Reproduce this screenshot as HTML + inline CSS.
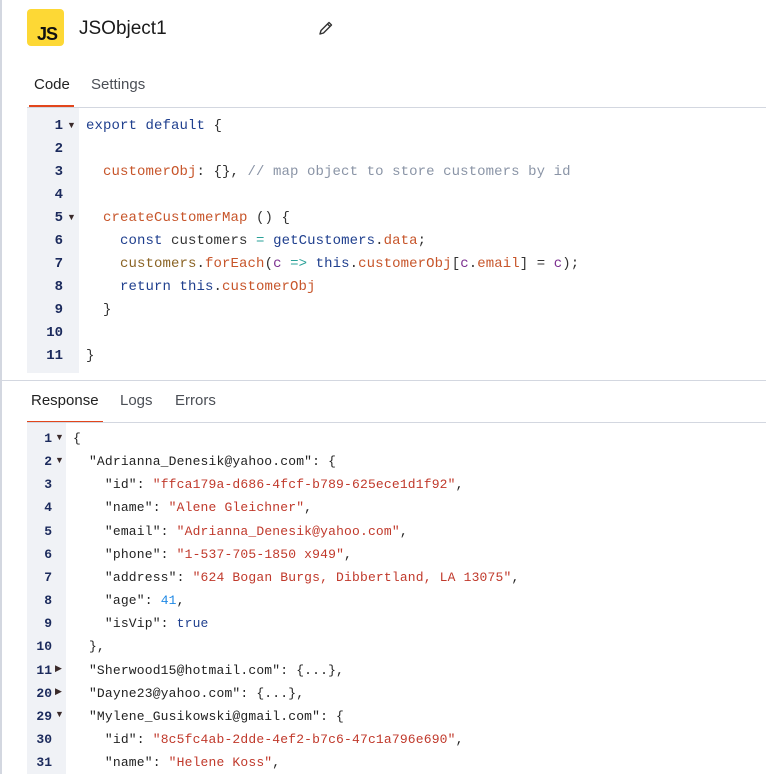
<!DOCTYPE html>
<html><head><style>
body{margin:0;width:766px;height:774px;overflow:hidden;background:#fff;font-family:"Liberation Sans",sans-serif;position:relative}
.lb{position:absolute;left:0;top:0;width:2px;height:774px;background:#d3d7e0}
.logo{position:absolute;left:27px;top:9px;width:37px;height:37px;background:#fdd835;border-radius:4px}
.logo span{position:absolute;left:10px;top:15px;font:bold 18px "Liberation Sans",sans-serif;color:#111;letter-spacing:-1px}
.title{position:absolute;left:79px;top:18px;font-size:19px;color:#1a1a1a}
.tab{position:absolute;font-size:15px;color:#4b4f56}
.ul{position:absolute;height:2px;background:#e2461c}
.hl{position:absolute;height:1px;background:#d3d7e0;left:27px;right:0}
.gut{position:absolute;left:27px;background:#f0f2f6}
.ln{position:absolute;font:bold 14px "Liberation Mono",monospace;color:#1b2a5c;text-align:right}
.code{position:absolute;font-family:"Liberation Mono",monospace;white-space:pre;color:#333}
.k{color:#1f3f8e}.p{color:#c7552a}.c{color:#8a94a6}.f{color:#8a6324}.s{color:#c0392b}.n{color:#1e88e5}.op{color:#2aa198}.v{color:#7b2f8f}
.ar{font-size:9px;color:#3a2a2a;font-weight:normal}
</style></head><body>
<div class="lb"></div>
<div class="logo"><span>JS</span></div>
<div class="title">JSObject1</div>
<svg style="position:absolute;left:318px;top:20px" width="16" height="16" viewBox="0 0 16 16"><path d="M2 14 L3 10.5 L11 2.5 L13.5 5 L5.5 13 Z M9.5 4 L12 6.5" fill="none" stroke="#333" stroke-width="1.4" stroke-linejoin="round"/></svg>
<div class="tab" style="left:34px;top:76px;color:#222">Code</div>
<div class="tab" style="left:91px;top:76px">Settings</div>
<div class="ul" style="left:29px;top:105px;width:45px"></div>
<div class="hl" style="top:107px"></div>
<div class="gut" style="top:108px;width:52px;height:265px"></div>
<div class="ln" style="left:27px;top:115px;width:36px;line-height:23px">1<br>2<br>3<br>4<br>5<br>6<br>7<br>8<br>9<br>10<br>11</div>
<div class="ar" style="position:absolute;left:67px;top:120px">▼</div>
<div class="ar" style="position:absolute;left:67px;top:212px">▼</div>
<div class="code" style="left:86px;top:115px;font-size:14px;line-height:23px;letter-spacing:0.1px"><span class="k">export default</span> {

  <span class="p">customerObj</span>: {}, <span class="c">// map object to store customers by id</span>

  <span class="p">createCustomerMap</span> () {
    <span class="k">const</span> customers <span class="op">=</span> <span class="k">getCustomers</span>.<span class="p">data</span>;
    <span class="f">customers</span>.<span class="p">forEach</span>(<span class="v">c</span> <span class="op">=&gt;</span> <span class="k">this</span>.<span class="p">customerObj</span>[<span class="v">c</span>.<span class="p">email</span>] = <span class="v">c</span>);
    <span class="k">return this</span>.<span class="p">customerObj</span>
  }

}</div>
<div class="hl" style="top:380px;left:0"></div>
<div class="tab" style="left:31px;top:392px;color:#222">Response</div>
<div class="tab" style="left:120px;top:392px">Logs</div>
<div class="tab" style="left:175px;top:392px">Errors</div>
<div class="ul" style="left:27px;top:421px;width:76px"></div>
<div class="hl" style="top:422px"></div>
<div class="gut" style="top:423px;width:39px;height:351px"></div>
<div class="ln" style="left:27px;top:427px;width:25px;line-height:23.15px;font-size:13px">1<br>2<br>3<br>4<br>5<br>6<br>7<br>8<br>9<br>10<br>11<br>20<br>29<br>30<br>31</div>
<div class="ar" style="position:absolute;left:55px;top:432px">▼</div>
<div class="ar" style="position:absolute;left:55px;top:455px">▼</div>
<div class="ar" style="position:absolute;left:55px;top:663px">▶</div>
<div class="ar" style="position:absolute;left:55px;top:686px">▶</div>
<div class="ar" style="position:absolute;left:55px;top:709px">▼</div>
<div class="code" style="left:73px;top:427px;font-size:13px;line-height:23.15px;color:#222;letter-spacing:0.17px">{
  "Adrianna_Denesik@yahoo.com": {
    "id": <span class="s">"ffca179a-d686-4fcf-b789-625ece1d1f92"</span>,
    "name": <span class="s">"Alene Gleichner"</span>,
    "email": <span class="s">"Adrianna_Denesik@yahoo.com"</span>,
    "phone": <span class="s">"1-537-705-1850 x949"</span>,
    "address": <span class="s">"624 Bogan Burgs, Dibbertland, LA 13075"</span>,
    "age": <span class="n">41</span>,
    "isVip": <span class="k">true</span>
  },
  "Sherwood15@hotmail.com": {...},
  "Dayne23@yahoo.com": {...},
  "Mylene_Gusikowski@gmail.com": {
    "id": <span class="s">"8c5fc4ab-2dde-4ef2-b7c6-47c1a796e690"</span>,
    "name": <span class="s">"Helene Koss"</span>,</div>
</body></html>
